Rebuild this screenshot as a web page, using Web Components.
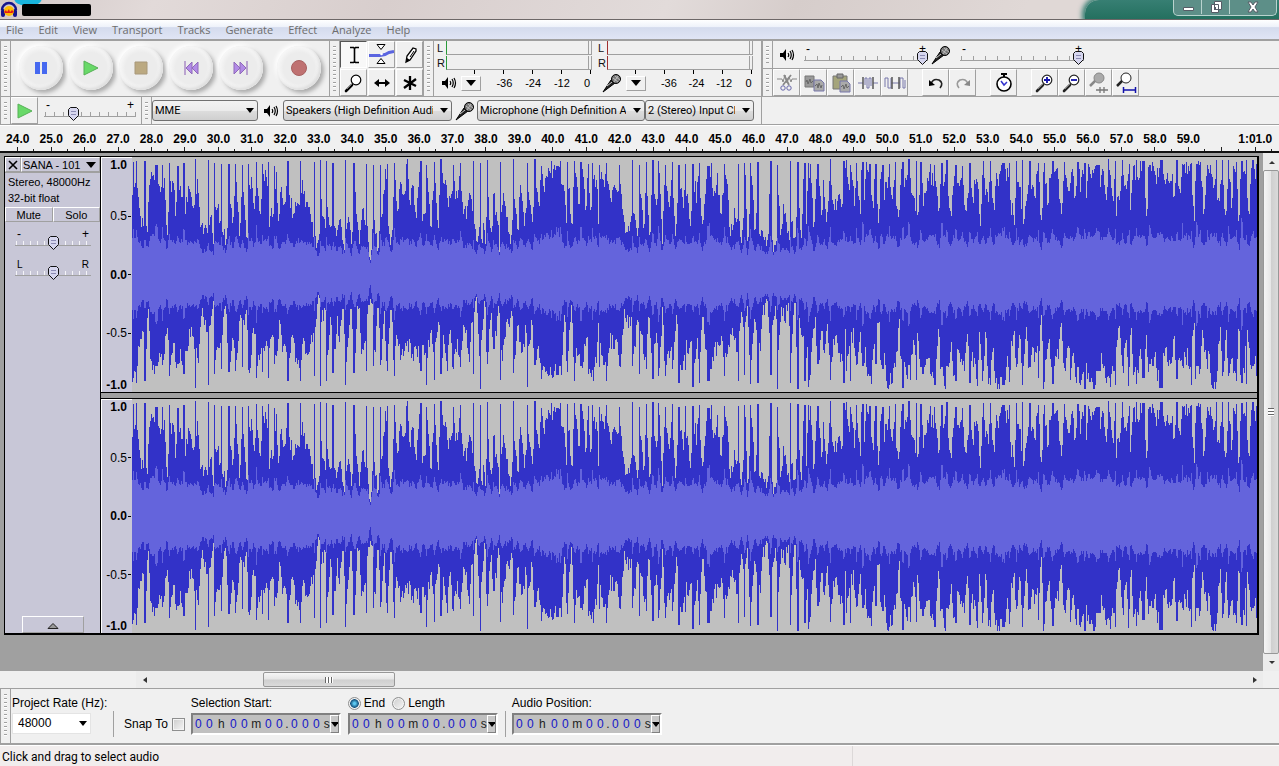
<!DOCTYPE html>
<html lang="en">
<head>
<meta charset="utf-8">
<title>Audio editor</title>
<style>
html,body{margin:0;height:100%}
body{font:12px/16px "Liberation Sans",Arial,sans-serif;color:#000;background:#f0f0f0}
</style>
</head>
<body>
<audio-editor></audio-editor>
<script>
const define = (name, css, html, ready) => {
  const tpl = document.createElement('template');
  tpl.innerHTML = `<style>*{box-sizing:border-box}[hidden]{display:none}button,select,input{font:inherit;color:inherit;margin:0}${css}</style>${html}`;
  customElements.define(name, class extends HTMLElement {
    connectedCallback() {
      if (this.shadowRoot) return;
      this.attachShadow({mode: 'open'}).append(tpl.content.cloneNode(true));
      if (ready) ready.call(this, this.shadowRoot);
    }
  });
};

/* ---------- icons ---------- */
const lens = (fill, stroke) => `<path d="M4 20l6-6" stroke="${stroke}" stroke-width="2.600" stroke-linecap="round"/><path d="M5 18l5-5" stroke="#999" stroke-width=".8"/><circle cx="14" cy="9" r="4.800" fill="${fill}" stroke="${stroke}" stroke-width="1.2"/>`;
const icons = {
  logo: [18, 18, '<path d="M2 10a7 7 0 0 1 14 0" fill="none" stroke="#14148c" stroke-width="2.4"/><rect x="1" y="9" width="4" height="8" rx="2" fill="#14148c"/><rect x="13" y="9" width="4" height="8" rx="2" fill="#14148c"/><circle cx="9" cy="11" r="5" fill="#fb0"/><path d="M4 12l2-2 1 2 2-3 1 3 2-2 2 2-2 1H5z" fill="#e21a1a"/>'],
  pause: [16, 16, '<path d="M2 2h5v12H2zM9 2h5v12H9z" fill="#4669f0"/>'],
  play: [16, 16, '<path d="M1 1l14 7L1 15z" fill="#69d969" stroke="#56b156"/>'],
  stop: [16, 16, '<path d="M2 2h12v12H2z" fill="#bba981" stroke="#a8987a"/>'],
  rewind: [16, 16, '<path d="M2 1v14" stroke="#8a5cb4"/><path d="M9 2v12L3 8zM15 2v12L9 8z" fill="#b28be6" stroke="#8f69ba"/>'],
  forward: [16, 16, '<path d="M14 1v14" stroke="#8a5cb4"/><path d="M7 2v12l6-6zM1 2v12l6-6z" fill="#b28be6" stroke="#8f69ba"/>'],
  record: [18, 18, '<circle cx="9" cy="9" r="7.5" fill="#bf7171" stroke="#a86060"/>'],
  ibeam: [24, 24, '<path d="M8 4.500h3.500L12.500 5.500 13.500 4.500H17M12.500 5v14M8 19.500h3.500l1-1 1 1H17" fill="none" stroke="#000" stroke-width="1.6"/>'],
  envelope: [25, 25, '<path d="M0 13.500h11l5-1 4-2 5-1" fill="none" stroke="#5a64e0" stroke-width="3"/><path d="M8 2.500h8L12 7.500zM8 21.500h8l-4-5z" fill="#fff" stroke="#000"/><circle cx="12.500" cy="12" r="1.300" fill="#fff"/>'],
  pencil: [24, 24, '<path d="M8 19l1-6 6-8 3 1v2l-6 9z" fill="#fff" stroke="#000" stroke-width="1.300"/><path d="M8 19l1-4 3 2z"/><path d="M12 14l4-6" stroke="#000"/>'],
  lens: [24, 24, lens('#fff', '#000')],
  shift: [24, 24, '<path d="M6 12h12" stroke="#000" stroke-width="2"/><path d="M9 8v8l-5-4zM15 8v8l5-4z"/>'],
  star: [24, 24, '<path d="M12 5v14M6 9l12 6M6 17l12-9" stroke="#000" stroke-width="2.300"/>'],
  speaker: [16, 16, '<path d="M1 6h3l3-4v12l-3-4H1z"/><path d="M9 6q1.500 2 0 4M11 4q2.500 4 0 8M13 3q3 5 0 10" fill="none" stroke="#000" stroke-width="1.200"/>'],
  mic: [20, 20, '<path d="M1 19l8-12 4 3z" fill="#222" stroke="#000"/><path d="M5 13l5-4" stroke="#ccc"/><circle cx="14" cy="6" r="4.500" fill="#777" stroke="#000"/><path d="M11 5l5 4M13 3l5 4M12 9l4-6" stroke="#ccc" stroke-width=".8"/>'],
  cut: [24, 24, '<path d="M2 8h5l1 3 2-7 2 8 2-6 2 5 1-3h5" fill="none" stroke="#888"/><path d="M8 14l8-10M14 14L9 4" stroke="#888" stroke-width="1.800"/><circle cx="8" cy="17" r="2.200" fill="none" stroke="#66a"/><circle cx="14" cy="17" r="2.200" fill="none" stroke="#66a"/>'],
  copy: [24, 24, '<path d="M3 5h9v11H3z" fill="#999" stroke="#777"/><path d="M12 9h7l3 3v8H12z" fill="#aaa" stroke="#77a"/><path d="M4 11l1-2 1 4 2-5 1 4 2-2M13 15l2-2 1 4 1-5 2 5 1-3" fill="none" stroke="#666"/>'],
  paste: [24, 24, '<path d="M4 5h14v13H4z" fill="#a5a57c" stroke="#777"/><path d="M8 3h6v4H8z" fill="#999" stroke="#666"/><path d="M11 10h7l3 3v8H11z" fill="#aaa" stroke="#77a"/><path d="M12 16l2-2 1 4 2-5 1 4 2-2" fill="none" stroke="#666"/>'],
  trim: [24, 24, '<path d="M2 12h5M17 12h5" stroke="#77a"/><path d="M7 6v12M17 6v12" stroke="#555" stroke-width="1.500"/><path d="M9 14V7h2v10h2V7h2v8" fill="none" stroke="#77a"/>'],
  silence: [24, 24, '<path d="M2 16V7h3v10h3V7M8 12h9M17 17V7h3v10h2V9" fill="none" stroke="#77a"/><path d="M9 6v12M16 6v12" stroke="#555" stroke-width="1.500"/>'],
  undo: [24, 24, '<path d="M7 13q2-6 8-4 5 3 1 8" fill="none" stroke="#222" stroke-width="1.600"/><path d="M5 9v6l6-1z"/>'],
  redo: [24, 24, '<path d="M17 13q-2-6-8-4-5 3-1 8" fill="none" stroke="#999" stroke-width="1.600"/><path d="M19 9v6l-6-1z" fill="#888"/>'],
  clock: [24, 24, '<circle cx="12" cy="13" r="7" fill="#fff" stroke="#000" stroke-width="1.600"/><path d="M9 3h6M12 3v3" stroke="#000" stroke-width="2"/><path d="M9 10l3 4 3-3" fill="none" stroke="#33c" stroke-width="1.500"/>'],
  zoomin: [24, 24, lens('#fff', '#222') + '<path d="M11 9h6M14 6v6" stroke="#11a" stroke-width="1.800"/>'],
  zoomout: [24, 24, lens('#fff', '#222') + '<path d="M11 9h6" stroke="#11a" stroke-width="1.800"/>'],
  fitsel: [24, 24, '<path d="M3 15l6-6" stroke="#888" stroke-width="2.500"/><circle cx="12" cy="7" r="5" fill="#aaa" stroke="#888"/><path d="M9 19h12M13 16v6M17 16v6" stroke="#777" stroke-width="1.300"/>'],
  fitproj: [24, 24, '<path d="M3 15l6-6" stroke="#222" stroke-width="2.500"/><circle cx="12" cy="7" r="5" fill="#fff" stroke="#222"/><path d="M10 19h11M9.500 16v6M21.500 16v6" stroke="#11a" stroke-width="1.500"/>'],
  down: [12, 8, '<path d="M1 1h10L6 7z"/>'],
  smalldown: [8, 5, '<path d="M0 0h8L4 5z"/>'],
  up: [12, 8, '<path d="M1 6.500h10L6 1.500z" fill="#999" stroke="#222"/>'],
  cross: [12, 12, '<path d="M2 2l8 8M10 2l-8 8" stroke="#000" stroke-width="1.600"/>'],
  min: [14, 12, '<path d="M2.500 6.500h10v3h-10z" fill="#fff" stroke="#565c66"/>'],
  restore: [14, 14, '<path d="M5.500 1.500h7v8h-7zM2.500 4.500h7v8h-7z" fill="#fff" stroke="#565c66"/><path d="M5 7h2v3H5z" fill="#565c66"/>'],
  close: [14, 12, '<path d="M2 1h3l2 3 2-3h3L9 6l3 5H9L7 8l-2 3H2l3-5z" fill="#fff" stroke="#565c66"/>']
};
define('app-icon', ':host{display:inline-flex;flex:none}svg{display:block}', '', function (root) {
  const [w, h, body] = icons[this.getAttribute('name')];
  root.innerHTML += `<svg width="${w}" height="${h}" viewBox="0 0 ${w} ${h}" aria-hidden="true">${body}</svg>`;
});

/* ---------- window chrome ---------- */
define('title-bar', `
:host{display:flex;height:20px;justify-content:space-between;overflow:hidden;border-bottom:1px solid #6d6767;
 background:linear-gradient(115deg,#d2c8c7,#e2dad9 12%,#d8cecd 30%,#e2dbda 52%,#d6cdcb 62%,#e0d8d6 80%)}
.l{display:flex;align-items:flex-start;gap:4px;background:radial-gradient(ellipse 14px 6px at 28px 0,#18b4dc 90%,transparent);width:120px}
.mask{width:69px;height:12px;margin-top:4px;background:#000;border-radius:2px}
.r{width:194px;display:flex;justify-content:flex-end;align-items:flex-start;background:linear-gradient(#377f73,#24705f);box-shadow:0 0 5px 3px #377f73;border-radius:14px 0 0 0}
.b{display:flex;height:16px;margin-right:2px;border:1px solid #b9d3ce;border-top:0;border-radius:0 0 5px 5px;background:#5d8f88}
button{border:0;border-right:1px solid #b9d3ce;background:none;padding:0;width:28px;display:grid;place-items:center;height:14px}
button:last-child{width:46px;border:0}`,
`<div class="l"><app-icon name="logo"></app-icon><span class="mask"></span></div>
<div class="r"><div class="b"><button aria-label="Minimize"><app-icon name="min"></app-icon></button><button aria-label="Restore"><app-icon name="restore"></app-icon></button><button aria-label="Close"><app-icon name="close"></app-icon></button></div></div>`);

define('menu-bar', `
:host{display:flex;height:21px;background:linear-gradient(#fff,#eef2fa 36%,#d4dbed 40%,#e0e5f5);border-bottom:2px solid #a0a0a0;font:11px/20px "Open Sans","Noto Sans",sans-serif;color:#6d6d6d}
nav{display:flex;padding-left:6px;gap:15px}
a{color:inherit;text-decoration:none}`,
`<nav>${'File,Edit,View,Transport,Tracks,Generate,Effect,Analyze,Help'.split(',').map(t => `<a href="#${t}">${t}</a>`).join('')}</nav>`);

/* ---------- toolbar parts ---------- */
define('tool-grip', `
:host{display:block;flex:none;width:11px;border:solid #a0a0a0;border-width:0 1px;background:#f0f0f0;padding:5px 3px}
i{display:block;height:100%;background:repeating-linear-gradient(#a0a0a0 0 1px,#fff 1px 2px,transparent 2px 4px)}`, '<i></i>');

define('round-button', `
:host{display:block;flex:none}
button{width:44px;height:44px;border:0;border-radius:50%;padding:0;display:grid;place-items:center;
 background:radial-gradient(circle,#ececec 50%,#f6f6f6 68%);box-shadow:3px 3px 4px #aaa,-2px -2px 4px #fff,inset -2px -2px 3px #ddd}`,
'<button><slot></slot></button>', function (r) { r.querySelector('button').setAttribute('aria-label', this.getAttribute('label')); });

define('tool-button', `
:host{display:block;flex:none;width:27px;height:27px}
:host([small]){width:20px;height:15px}
button{width:100%;height:100%;padding:0;display:grid;place-items:center;background:#f0f0f0;border:1px solid;border-color:#fff #a0a0a0 #a0a0a0 #fff}
:host([pressed]) button{border-color:#555 #fff #fff #555;background:#f8f8f8}`,
'<button><slot></slot></button>', function (r) { r.querySelector('button').setAttribute('aria-label', this.getAttribute('label')); });

const thumb = `url("data:image/svg+xml,%3Csvg xmlns='http://www.w3.org/2000/svg' width='11' height='14'%3E%3Cpath d='M2.500.5h6l2 2v6l-5 5-5-5v-6z' fill='%23d6d6ee' stroke='%23111'/%3E%3Cpath d='M3 4.500h5M3 7.500h5' stroke='%238c8cb4'/%3E%3C/svg%3E")`;
define('level-slider', `
:host{display:grid;flex:none;width:124px;height:20px;font-size:10px;line-height:9px;--step:12px}
.s{grid-area:1/1;display:flex;justify-content:space-between;padding:0 2px}
:host([signs]) .s{font-size:12px;line-height:8px}
input{grid-area:1/1;align-self:end;appearance:none;width:100%;height:14px;
 background:linear-gradient(#a0a0a0,#a0a0a0) 0 9px/100% 1px no-repeat,repeating-linear-gradient(90deg,var(--tick,#a0a0a0) 0 1px,transparent 1px var(--step)) 1px 5px/100% 4px no-repeat}
input::-webkit-slider-thumb{appearance:none;width:11px;height:14px;background:${thumb}}`,
'<div class="s" aria-hidden="true"><span></span><span></span></div><input type="range" min="0" max="100">', function (r) {
  const i = r.querySelector('input'), s = r.querySelectorAll('span');
  i.setAttribute('value', this.getAttribute('value'));
  i.setAttribute('aria-label', this.getAttribute('label'));
  [s[0].textContent, s[1].textContent] = this.hasAttribute('signs') ? ['-', '+'] : ['L', 'R'];
});

define('drop-list', `
:host{display:block;flex:none}
label{display:block;position:relative}
select{appearance:none;width:100%;height:21px;padding:0 18px 0 2px;border:1px solid #707070;border-radius:3px;font:11px/17px Roboto,"Open Sans",sans-serif;text-overflow:clip;
 background:linear-gradient(#f2f2f2,#ebebeb 50%,#dddddd 51%,#cfcfcf)}
:host([plain]) select{background:#fff;border-color:#e4e4e4;border-radius:0;font:12px/17px "Liberation Sans",Arial,sans-serif;padding-left:5px}
app-icon{position:absolute;right:4px;top:8px;pointer-events:none}`,
'<label><select><option></option></select><app-icon name="smalldown"></app-icon></label>', function (r) {
  r.querySelector('option').textContent = this.getAttribute('value');
  r.querySelector('select').setAttribute('aria-label', this.getAttribute('label'));
});

define('level-meter', `
:host{display:block;flex:none;width:161px;font-size:11px;line-height:13px}
.row{display:flex;height:14px}
.row+.row{margin-top:1px}
.row b{font-weight:400;width:9px;color:#111;line-height:15px}
.bar{flex:none;width:146px;border:solid #a0a0a0;border-width:0 1px 1px 0;border-left:1px solid var(--edge);box-shadow:inset -2px 0 #f0f0f0,inset -3px 0 #a0a0a0}
.ticks{height:4px;width:146px;margin-left:9px;background:repeating-linear-gradient(90deg,transparent 0 28px,#000 28px 29px)}
.b{display:flex;align-items:center;height:18px;padding-left:4px}
.b tool-button{margin:0 9px 0 4px}
.b span{width:29px;text-align:center}
.b span:last-child{width:22px}
app-icon{width:17px;justify-content:center}`,
`<div class="row"><b>L</b><div class="bar"></div></div><div class="row"><b>R</b><div class="bar"></div></div><div class="ticks"></div>
<div class="b"><slot></slot><tool-button small label="Meter options"><app-icon name="down"></app-icon></tool-button><span>-36</span><span>-24</span><span>-12</span><span>0</span></div>`);

define('tool-dock', `
:host{display:flex;border-bottom:1px solid #a0a0a0;background:#f0f0f0}
.left{width:762px;flex:none;border-right:1px solid #a0a0a0}
.right{flex:1}
.row{display:flex}
.r1{height:56px;border-bottom:1px solid #a0a0a0}
.r2{height:27px;align-items:stretch}
.transport{display:flex;width:318px;padding:5px 0 0 8px;gap:6px}
.transport round-button:last-child{margin-left:8px}
.tools{display:grid;grid-template-columns:repeat(3,28px);width:83px;row-gap:1px}
.meters{display:flex;width:325px;padding-left:3px}
.cell{display:flex;align-items:center}
.speed{width:103px;padding-left:6px}
.devices{display:flex;align-items:center}
.devices app-icon{width:25px;justify-content:center}
.mix{height:28px;border-bottom:1px solid #a0a0a0}
.mix .cell{padding-left:6px}
.mix level-slider{margin:0 3px 0 9px}
.edit{height:28px;border-bottom:1px solid #a0a0a0}
.group{display:flex;margin-right:14px}`,
`<div class="left">
 <div class="row r1"><tool-grip></tool-grip>
  <div class="transport">${['pause', 'play', 'stop', 'rewind', 'forward', 'record'].map(n => `<round-button label="${n}"><app-icon name="${n}"></app-icon></round-button>`).join('')}</div>
  <tool-grip></tool-grip>
  <div class="tools">${['ibeam', 'envelope', 'pencil', 'lens', 'shift', 'star'].map((n, i) => `<tool-button label="${n}" ${i ? '' : 'pressed'}><app-icon name="${n}"></app-icon></tool-button>`).join('')}</div>
  <tool-grip></tool-grip>
  <div class="meters"><level-meter style="--edge:#2a9a3a"><app-icon name="speaker"></app-icon></level-meter><level-meter style="--edge:#a03030"><app-icon name="mic"></app-icon></level-meter></div>
 </div>
 <div class="row r2"><tool-grip></tool-grip><tool-button label="Play at speed"><app-icon name="play"></app-icon></tool-button>
  <div class="cell speed"><level-slider signs value="30" label="Playback speed" style="--step:9px;width:92px"></level-slider></div>
  <tool-grip></tool-grip>
  <div class="devices"><drop-list style="width:106px" value="MME" label="Audio host"></drop-list><app-icon name="speaker"></app-icon>
  <drop-list style="width:169px" value="Speakers (High Definition Audio Device)" label="Output device"></drop-list><app-icon name="mic"></app-icon>
  <drop-list style="width:168px" value="Microphone (High Definition Audio Device)" label="Input device"></drop-list>
  <drop-list style="width:109px" value="2 (Stereo) Input Channels" label="Input channels"></drop-list></div>
 </div>
</div>
<div class="right">
 <div class="row mix"><tool-grip></tool-grip><div class="cell"><app-icon name="speaker"></app-icon><level-slider signs value="100" label="Output volume"></level-slider><app-icon name="mic"></app-icon><level-slider signs value="100" label="Input volume"></level-slider></div></div>
 <div class="row edit"><tool-grip></tool-grip>${[['cut', 'copy', 'paste', 'trim', 'silence'], ['undo', 'redo'], ['clock'], ['zoomin', 'zoomout', 'fitsel', 'fitproj']].map(g => `<div class="group">${g.map(n => `<tool-button label="${n}"><app-icon name="${n}"></app-icon></tool-button>`).join('')}</div>`).join('')}</div>
</div>`);

/* ---------- timeline ---------- */
define('time-ruler', `
:host{display:grid;grid-template-columns:repeat(38,minmax(0,1fr));height:28px;padding:0 7px 0 1px;border-top:1px solid #fff;border-bottom:2px solid #111;font-weight:700;background:#f0f0f0;overflow:hidden}
div{display:flex;flex-direction:column;align-items:center;justify-content:space-between;white-space:nowrap;padding-top:5px;
 background:linear-gradient(#222,#222) right bottom/1px 2px no-repeat}
i{width:1px;height:4px;background:#222}`, '', function (r) {
  for (let s = 24; s < 62; s++) {
    const d = document.createElement('div');
    d.innerHTML = `<span>${s < 60 ? s + '.0' : s === 61 ? '1:01.0' : '&nbsp;'}</span><i></i>`;
    r.append(d);
  }
});

/* ---------- waveform ---------- */
/* Peak envelope in four 282-column segments; points are x,y at triple scale with the zero line at 360. */
const upper = [
'3,110 18,100 34,200 48,235 54,100 64,50 78,50 90,110 100,80 108,215 116,80 130,100 134,210 138,70 150,110 162,155 176,100 184,165 194,150 200,90 208,190 216,215 226,230 240,200 248,250 256,140 268,200 284,245 296,150 306,190 314,65 326,235 334,80 348,250 354,100 362,60 370,160 376,60 388,175 396,70 406,60 414,190 422,160 430,170 436,65 442,200 450,120 462,130 470,40 480,150 490,180 496,130 508,170 514,90 528,150 540,180 548,240 556,278 564,250 572,150 580,210 590,170 606,220 618,220 626,200 640,280 650,200 664,250 672,120 684,245 694,165 704,200 718,290 726,200 742,270 752,180 764,60 774,230 782,260 790,60 800,155 810,70 820,130 828,20 836,130 846,95',
'0,110 8,185 20,60 28,215 36,165 44,70 54,215 64,60 76,225 82,60 94,75 108,140 120,90 132,130 142,50 150,155 160,180 168,110 178,160 190,260 198,210 206,260 212,185 218,280 222,110 236,235 242,130 252,180 260,265 268,130 280,170 292,260 300,210 306,130 314,230 322,80 336,195 344,100 350,130 358,215 364,60 378,140 384,60 392,100 402,50 414,60 430,40 444,60 454,130 460,200 466,80 476,210 484,50 498,130 508,60 518,150 526,60 534,160 542,60 552,90 556,205 562,60 570,80 580,60 592,130 606,95 618,80 630,170 642,240 652,200 660,150 674,260 682,110 692,215 700,60 710,240 718,40 730,150 738,50 748,250 756,60 768,150 776,70 788,230 796,60 810,140 820,100 832,190 840,60 846,130',
'0,75 4,120 12,60 22,200 30,130 38,30 48,60 58,120 66,60 78,180 88,60 96,80 104,220 120,180 130,180 140,265 150,60 158,250 168,60 180,215 188,160 194,240 200,195 210,265 218,250 226,80 234,280 242,285 248,110 258,230 266,165 276,220 284,275 290,210 300,260 308,90 318,225 328,50 334,180 340,40 350,70 356,240 366,50 380,160 386,90 394,200 404,60 418,160 432,110 440,130 450,60 460,90 472,60 478,130 486,50 496,190 500,40 508,110 514,60 524,40 534,160 540,60 550,180 558,50 566,160 572,90 582,60 590,130 598,60 610,205 618,50 630,80 640,50 656,130 670,190 676,40 686,130 696,80 712,60 722,90 732,190 738,60 744,100 752,40 768,180 778,60 788,80 798,60 814,170 824,60 834,130 840,70 846,60',
'0,60 10,200 18,40 24,110 34,140 40,50 52,160 56,60 66,80 78,30 90,60 96,60 104,160 112,190 120,60 130,120 140,190 150,120 158,30 166,100 174,110 182,40 194,205 200,40 212,130 222,30 232,50 242,60 254,195 262,30 274,90 286,50 294,120 302,30 312,90 318,40 326,130 336,30 344,60 354,20 368,80 378,60 388,110 396,50 408,130 414,50 418,160 424,100 428,140 436,40 446,110 454,60 460,140 470,40 480,80 492,30 502,30 508,190 516,30 528,40 538,70 548,30 556,30 564,110 572,60 584,70 592,120 598,30 608,120 618,30 630,60 640,40 652,190 656,40 668,40 674,80 680,175 690,60 700,40 710,100 718,70 724,150 734,60 746,180 754,40 764,140 770,50 778,60 786,210 792,30 802,60 816,190 824,30 832,60 840,60'];
const lower = [
'3,670 12,640 24,600 34,545 44,620 52,460 58,640 68,650 78,640 88,620 96,640 108,515 116,660 128,570 138,640 148,600 160,630 170,575 180,530 190,585 200,620 214,470 222,510 232,550 246,450 254,600 268,575 284,475 294,640 306,540 316,640 330,480 340,510 346,490 356,640 368,515 378,620 390,600 404,570 412,570 426,530 436,620 446,490 454,600 462,570 470,640 484,540 498,640 508,640 516,560 528,615 540,560 550,520 562,450 572,490 582,490 590,590 600,495 610,590 618,515 626,555 634,450 645,620 660,445 668,640 682,460 692,585 704,560 714,460 722,440 730,600 742,450 750,620 760,500 768,640 782,450 788,640 798,540 808,600 818,600 830,580 846,600',
'0,630 8,570 20,620 30,590 40,610 54,550 64,590 78,510 84,640 92,550 102,640 112,530 120,640 132,575 142,640 152,515 162,560 168,605 178,490 190,455 200,600 208,510 216,455 222,640 234,480 240,600 248,545 260,460 266,620 276,530 288,505 298,490 304,610 316,530 326,610 338,540 346,600 356,510 364,640 378,590 380,640 392,660 400,680 410,650 424,660 434,640 444,650 456,500 462,640 474,475 484,630 496,590 504,640 516,590 524,540 530,640 538,670 548,630 556,520 564,600 574,640 582,640 590,565 602,570 612,580 620,640 634,490 646,510 656,490 662,600 674,500 684,520 696,620 708,505 718,640 730,560 738,660 748,490 756,640 768,600 776,560 780,620 790,500 798,620 808,640 818,560 826,590 834,560 840,640 846,650',
'0,600 6,580 14,650 22,485 32,580 42,640 50,640 60,590 70,590 80,560 88,640 96,590 108,540 118,550 128,620 138,490 148,560 158,450 164,640 172,580 180,510 188,600 196,570 206,480 218,450 226,600 232,515 242,455 250,580 260,465 268,500 280,460 288,600 300,450 306,640 314,510 324,540 330,660 336,600 342,690 352,560 360,500 368,640 380,550 388,600 396,500 406,640 414,580 422,560 432,600 442,620 450,520 458,600 464,560 474,550 486,640 496,560 502,690 510,600 518,660 528,680 538,590 552,490 558,660 566,600 578,690 592,680 604,620 612,500 618,640 632,650 644,690 652,580 660,590 668,550 678,690 690,640 704,640 720,690 730,530 740,690 754,690 768,570 778,690 786,600 796,610 806,640 818,540 824,640 834,620 846,660',
'0,690 8,535 16,680 26,560 36,690 48,570 56,700 66,690 78,700 92,630 98,690 102,590 110,535 118,660 128,560 136,640 148,530 156,690 164,600 178,610 186,590 194,485 198,690 208,620 218,570 224,660 234,615 244,600 254,515 262,690 274,560 280,660 290,600 298,690 312,690 326,580 330,680 346,690 354,700 360,630 368,650 376,610 386,690 398,690 408,640 414,690 420,540 428,545 436,660 448,540 454,690 462,530 468,650 480,660 490,610 500,670 508,550 516,700 524,640 534,610 540,670 552,700 560,600 568,600 576,630 584,610 592,555 598,690 606,620 618,640 628,585 638,640 646,570 652,510 656,690 668,640 678,545 684,600 696,590 702,690 716,700 724,600 730,540 736,690 748,550 754,690 764,640 778,650 786,510 792,700 800,660 806,600 812,540 820,620 828,640 838,600'];
/* Transients: x, with an optional width in columns. */
const hits = [
'6 14 38,2 72,3 94 115 138,2 155,2 193 232 250 270 290,2 312 332 352 376 392 410 430 468,2 508 548 568 586 604,2 643 665,2 706 727 748 768 788',
'20,2 40 62 80,2 121 142 181 200 221 262 301 341 363,2 384 414 430,3 440 461 482 500,2 526 538 559 579 618 658 678 700 716,2 736 756 776 795,2 817 837,2',
'12 36,3 48 88 128 146 166 186,2 224,2 246 286 306,2 327,2 338 346 366,2 404 444,2 452 464 484 500,2 514 522,2 539,2 560,2 581 600 620,2 638,2 664 676,2 706 718 738,2 754,2 780,2 800 822,2',
'18 38 76,3 96 118 134 156,2 182 200 224,2 262 300,2 320,2 356,4 394 414 434 455 478 496,3 516,2 550,3 597,2 616 628 641 656,2 668 690 716 734 754 776 793,2 806 825,2 837'];
const pairs = s => s.split(' ').map(p => p.split(',').map(Number));
const noise = n => { const v = Math.sin(n * 127.1) * 43758.5453; return v - Math.floor(v); };
const at = (pts, x) => {
  let i = 1;
  while (i < pts.length - 1 && pts[i][0] < x) i++;
  const [a, b] = [pts[i - 1], pts[i]];
  const t = Math.max(0, Math.min(1, ((x - a[0]) / (b[0] - a[0]) - .5) * 1.3 + .5));
  return a[1] + (b[1] - a[1]) * t;
};
const wave = (() => {
  let peak = '', rms = '';
  for (let seg = 0; seg < 4; seg++) {
    const up = pairs(upper[seg]), lo = pairs(lower[seg]), spikes = pairs(hits[seg]);
    for (let c = 0; c < 282; c++) {
      const col = seg * 282 + c, x = c * 3 + 1;
      let a = 360 - at(up, x), b = at(lo, x) - 360;
      const mid = (a + b) / 2;
      a += (noise(col) - .6) * 50; b += (noise(col + 3000) - .6) * 50;
      let inner = 38 + mid * .25 + (noise(col + 7000) - .5) * 18;
      const hit = spikes.find(s => c >= Math.round(s[0] / 3) && c < Math.round(s[0] / 3) + (s[1] || 1));
      if (hit) { a = 325 + noise(hit[0]) * 20; b = 270 + noise(hit[0] + seg) * 77; inner += noise(hit[0] + 5) * 40; }
      a = Math.min(345, a); b = Math.min(345, b); inner = Math.min(inner, a - 9, b - 9);
      const X = col + .5;
      peak += `M${X} ${Math.round(117 - a / 3)}V${Math.round(117 + b / 3)}`;
      rms += `M${X} ${Math.round(117 - inner / 3)}V${Math.round(117 + inner / 3)}`;
    }
  }
  return {peak, rms};
})();
define('wave-view', `
:host{display:block;background:#c0c0c0;min-width:0;min-height:0;overflow:hidden}
svg{display:block;width:100%;height:100%}`,
`<svg viewBox="1 0 1125 234" preserveAspectRatio="none" shape-rendering="crispEdges" role="img" aria-label="Waveform"><path d="${wave.peak}" stroke="#3232c8"/><path d="${wave.rms}" stroke="#6464dc"/></svg>`);

define('amp-ruler', `
:host{display:grid;grid-template-rows:1fr 2fr 2fr 2fr 1fr;background:#c8c7d7;border:solid #fff;border-width:1px 0 0 1px;text-align:right;line-height:14px;min-height:0}
div{display:flex;align-items:center;justify-content:flex-end;gap:1px;padding-right:1px;min-height:0}
.top{align-items:flex-start;padding-right:5px}
.end{align-items:flex-end;padding-right:5px}
i{width:3px;height:1px;background:#000}`,
'<div class="top"><b>1.0</b></div><div>0.5<i></i></div><div><b>0.0</b><i></i></div><div>-0.5<i></i></div><div class="end"><b>-1.0</b></div>');

define('track-panel', `
:host{display:flex;flex-direction:column;background:#c8c7d7;border-right:1px solid #000;font-size:11px;line-height:16px}
.t{display:flex;height:15px}
button{border:1px solid;border-color:#fff #a0a0a0 #a0a0a0 #fff;background:none;padding:0;display:flex;align-items:center;justify-content:center;overflow:hidden}
.x{width:16px}.n{flex:1;justify-content:space-between;white-space:nowrap;padding:0 2px 0 1px}
.i{padding:1px 3px 0;border-top:1px solid #a0a0a0;height:35px}
.m{display:grid;grid-template-columns:1fr 1fr;height:15px}
.s{display:grid;justify-content:center;row-gap:10px;padding:8px 0 0 1px}
level-slider{width:76px;--step:7px;--tick:#f4f4f8}
.c{width:62px;height:17px;margin:auto auto 0;padding-top:2px}`,
`<div class="t"><button class="x" aria-label="Close track"><app-icon name="cross"></app-icon></button><button class="n"><span>SANA - 101</span><app-icon name="down"></app-icon></button></div>
<div class="i">Stereo, 48000Hz<br>32-bit float</div>
<div class="m"><button>Mute</button><button>Solo</button></div>
<div class="s"><level-slider signs value="50" label="Gain"></level-slider><level-slider value="50" label="Pan"></level-slider></div>
<button class="c" aria-label="Collapse track"><app-icon name="up"></app-icon></button>`);

define('audio-track', `
:host{display:grid;grid-template-columns:96px 1fr;border:1px solid #000;border-right-width:2px;border-bottom-width:2px;background:#a0a0a0;min-height:0}
.ch{display:grid;grid-template-rows:1fr 1fr;row-gap:5px;min-height:0}
.c{display:grid;grid-template-columns:31px 1fr;min-height:0}
.c:first-child{border-bottom:1px solid #000}.c:last-child{border-top:1px solid #000}`,
'<track-panel></track-panel><div class="ch"><div class="c"><amp-ruler></amp-ruler><wave-view></wave-view></div><div class="c"><amp-ruler></amp-ruler><wave-view></wave-view></div></div>');

define('scroll-bar', `
:host{display:flex;background:#ececec;align-items:stretch}
:host([vertical]){flex-direction:column}
.a{flex:none;width:17px;height:17px;display:grid;place-items:center}
.a svg{fill:#333}
.track{flex:1;display:flex}
.thumb{display:grid;place-items:center;border:1px solid #979797;border-radius:2px;background:linear-gradient(#f5f5f5,#e6e6e6 48%,#cfcfcf 52%,#dadada)}
:host(:not([vertical])) .thumb{width:132px;margin:1px 0 1px 110px}
:host([vertical]) .thumb{flex:1;background:linear-gradient(90deg,#f5f5f5,#e6e6e6 48%,#cfcfcf 52%,#dadada)}
.g{width:8px;height:6px;background:repeating-linear-gradient(90deg,#666 0 1px,#fff 1px 3px)}
:host([vertical]) .g{width:6px;height:8px;background:repeating-linear-gradient(#666 0 1px,#fff 1px 3px)}
:host([vertical]) .h,:host(:not([vertical])) .v{display:none}`,
`<div class="a"><svg width="8" height="8"><path class="h" d="M6 1v6L2 4z"/><path class="v" d="M1 6h6L4 3z"/></svg></div>
<div class="track"><div class="thumb"><span class="g"></span></div></div>
<div class="a"><svg width="8" height="8"><path class="h" d="M2 1v6l4-3z"/><path class="v" d="M1 2h6L4 5z"/></svg></div>`);

define('track-area', `
:host{flex:1;display:grid;grid-template:minmax(400px,1fr) 17px/minmax(0,1fr) 16px;min-height:0}
.canvas{display:grid;background:#a0a0a0;padding:3px 4px 36px;min-height:0}
.h{padding-left:136px;background:#f0f0f0;display:grid}`,
'<div class="canvas"><audio-track></audio-track></div><scroll-bar vertical></scroll-bar><div class="h"><scroll-bar></scroll-bar></div>');

/* ---------- selection bar ---------- */
define('time-field', `
:host{display:flex;width:150px;height:22px;background:#c0c0c0;border:2px solid;border-color:#808080 #fff #fff #808080;font:12px/19px "Liberation Sans",Arial,sans-serif}
span{flex:none;width:11px;text-align:center;color:#1414c8}
.u{width:13px;color:#222}
.p{width:4px;color:#222}
.u.s{width:8px;text-align:right}
button{flex:none;width:9px;margin-left:auto;padding:0;background:#c8c8c8;border:1px solid;border-color:#fff #808080 #808080 #fff;display:grid;place-items:center;overflow:hidden}`,
[...'00h00m00.000s'].map(c => `<span${/[hms]/.test(c) ? ` class="u ${c}"` : c === '.' ? ' class="p"' : ''}>${c}</span>`).join('') + '<button aria-label="Time format"><app-icon name="smalldown"></app-icon></button>');

define('selection-bar', `
:host{display:flex;height:57px;border-top:1px solid #a0a0a0;border-bottom:2px solid #a0a0a0;background:#f0f0f0}
.g{display:grid;grid-template-rows:16px 22px;row-gap:2px;align-content:start;padding-top:6px}
.g>label,.g>span,.r{line-height:16px;white-space:nowrap}
.p{width:102px;padding-left:1px}
drop-list{width:79px}
hr{width:1px;height:26px;margin:22px 0 0;border:0;background:#a0a0a0}
.snap{align-self:flex-start;margin:24px 6px 0 10px;display:flex;align-items:center;height:22px;gap:4px}
input{appearance:none;width:13px;height:13px;border:1px solid #8e8f8f;background:linear-gradient(135deg,#ccc,#f6f6f6);box-shadow:inset 0 0 0 1px #f4f4f4;flex:none}
[type=radio]{border-radius:50%}
[type=radio]:checked{background:radial-gradient(circle,#5cc8f0 0 1px,#12507c 4px,#eee 5px)}
.r,.r label{display:flex;align-items:center;gap:3px}.r{gap:7px}
.e{margin:0 7px}.a{margin-left:6px}`,
`<tool-grip></tool-grip>
<div class="g p"><span>Project Rate (Hz):</span><drop-list plain value="48000" label="Project Rate (Hz)"></drop-list></div><hr>
<label class="snap">Snap To<input type="checkbox"></label>
<div class="g"><span>Selection Start:</span><time-field></time-field></div>
<div class="g e"><div class="r"><label><input type="radio" name="mode" checked>End</label><label><input type="radio" name="mode">Length</label></div><time-field></time-field></div><hr>
<div class="g a"><span>Audio Position:</span><time-field></time-field></div>`);

define('status-bar', `
:host{display:grid;grid-template-columns:2fr 1fr;height:21px;border-top:1px solid #fff;background:#f1eded;font:12px/22px Roboto,"Open Sans",sans-serif}
span{padding-left:2px;border-right:1px solid #dcd8d8}`, '<span>Click and drag to select audio</span>');

define('audio-editor', ':host{display:flex;flex-direction:column;min-height:100vh}',
'<title-bar></title-bar><menu-bar></menu-bar><tool-dock></tool-dock><time-ruler></time-ruler><track-area></track-area><selection-bar></selection-bar><status-bar></status-bar>');
</script>
</body>
</html>
